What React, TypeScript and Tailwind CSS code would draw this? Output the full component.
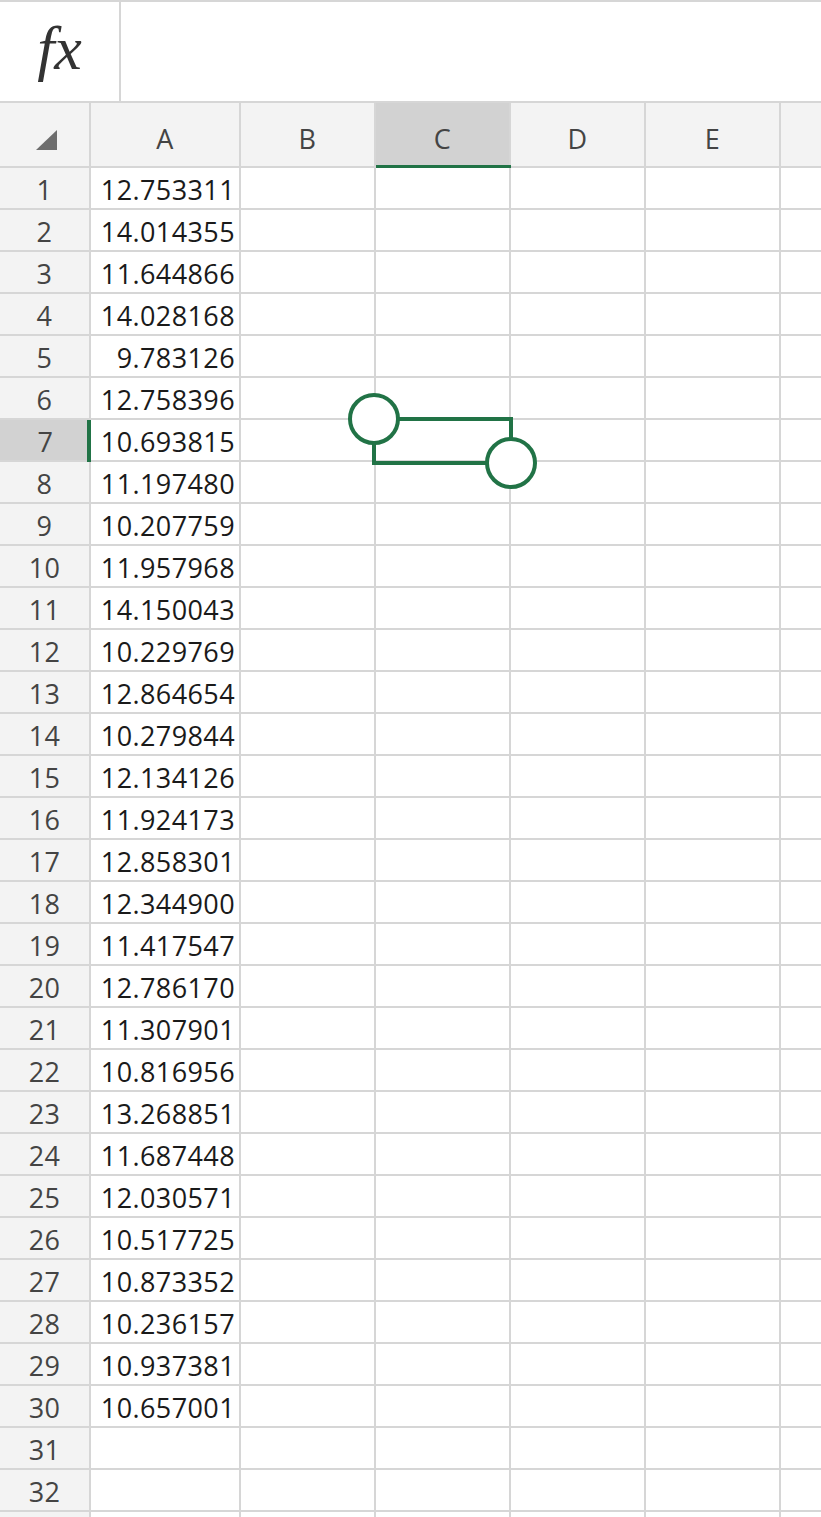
import React from "react";

const VALUES = [
  "12.753311", "14.014355", "11.644866", "14.028168", "9.783126", "12.758396",
  "10.693815", "11.197480", "10.207759", "11.957968", "14.150043", "10.229769",
  "12.864654", "10.279844", "12.134126", "11.924173", "12.858301", "12.344900",
  "11.417547", "12.786170", "11.307901", "10.816956", "13.268851", "11.687448",
  "12.030571", "10.517725", "10.873352", "10.236157", "10.937381", "10.657001",
];

const ROWS = Array.from({ length: 32 }, (_, i) => i + 1);
const COLS = ["B", "C", "D", "E"];

const font = { fontFamily: '"Open Sans", "Noto Sans", sans-serif' };

const SelectionHandles = () => (
  <svg
    className="absolute left-[340px] top-[385px]"
    width="210"
    height="115"
    viewBox="0 0 210 115"
  >
    <rect x="34" y="34" width="137" height="44" fill="none" stroke="#217346" strokeWidth="4" />
    <circle cx="34" cy="34" r="24" fill="#ffffff" stroke="#217346" strokeWidth="4" />
    <circle cx="171" cy="78" r="24" fill="#ffffff" stroke="#217346" strokeWidth="4" />
  </svg>
);

export default function App() {
  return (
    <div className="relative w-[821px] h-[1517px] overflow-hidden bg-white text-[#333]" style={font}>
      {/* formula bar */}
      <div className="flex h-[101px] border-t-2 border-[#d6d6d6]">
        <div className="w-[121px] border-r-2 border-[#d6d6d6] flex items-center justify-center">
          <span className="italic text-[62px] leading-none text-[#333] pb-2" style={{ fontFamily: '"Liberation Serif", serif' }}>
            fx
          </span>
        </div>
        <div className="flex-1" />
      </div>

      {/* column headers */}
      <div className="flex h-[67px] border-t-2 border-[#d6d6d6] bg-[#f3f3f3] text-[27px] tracking-[0.4px] text-[#444]">
        <div className="w-[91px] border-r-2 border-b-2 border-[#d6d6d6] flex items-end justify-center pb-4">
          <svg width="22" height="20" viewBox="0 0 22 20" className="ml-1">
            <polygon points="21,0 21,20 0,20" fill="#6e6e6e" />
          </svg>
        </div>
        <div className="w-[150px] border-r-2 border-b-2 border-[#d6d6d6] flex items-center justify-center pt-[10px]">A</div>
        {COLS.map((c) =>
          c === "C" ? (
            <div key={c} className="w-[135px] border-r-2 border-[#d6d6d6] bg-[#d2d2d2] flex flex-col">
              <div className="flex-1 flex items-center justify-center pt-[10px]">C</div>
              <div className="h-[3px] bg-[#217346] -mr-[2px]" />
            </div>
          ) : (
            <div key={c} className="w-[135px] border-r-2 border-b-2 border-[#d6d6d6] flex items-center justify-center pt-[10px]">
              {c}
            </div>
          )
        )}
        <div className="flex-1 border-b-2 border-[#d6d6d6]" />
      </div>

      {/* rows */}
      <div className="flex flex-col">
        {ROWS.map((r) => (
          <div key={r} className="flex h-[42px] text-[27px] tracking-[0.4px]">
            <div
              className={
                r === 7
                  ? "w-[91px] border-b-2 border-[#d6d6d6] bg-[#d2d2d2] flex items-center justify-center pt-[5px] text-[#444] relative"
                  : "w-[91px] border-r-2 border-b-2 border-[#d6d6d6] bg-[#f3f3f3] flex items-center justify-center pt-[5px] text-[#444]"
              }
            >
              {r}
              {r === 7 && <div className="absolute right-0 top-0 bottom-[-2px] w-[4px] bg-[#217346]" />}
            </div>
            <div className="w-[150px] border-r-2 border-b-2 border-[#d6d6d6] flex items-center justify-end pr-[4px] pt-[5px] text-[#1a1a1a]">
              {VALUES[r - 1] ?? ""}
            </div>
            {COLS.map((c) => (
              <div key={c} className="w-[135px] border-r-2 border-b-2 border-[#d6d6d6]" />
            ))}
            <div className="flex-1 border-b-2 border-[#d6d6d6]" />
          </div>
        ))}
        {/* partially visible next row */}
        <div className="flex h-[42px]">
          <div className="w-[91px] border-r-2 border-[#d6d6d6] bg-[#f3f3f3]" />
          <div className="w-[150px] border-r-2 border-[#d6d6d6]" />
          {COLS.map((c) => (
            <div key={c} className="w-[135px] border-r-2 border-[#d6d6d6]" />
          ))}
          <div className="flex-1" />
        </div>
      </div>

      <SelectionHandles />
    </div>
  );
}
